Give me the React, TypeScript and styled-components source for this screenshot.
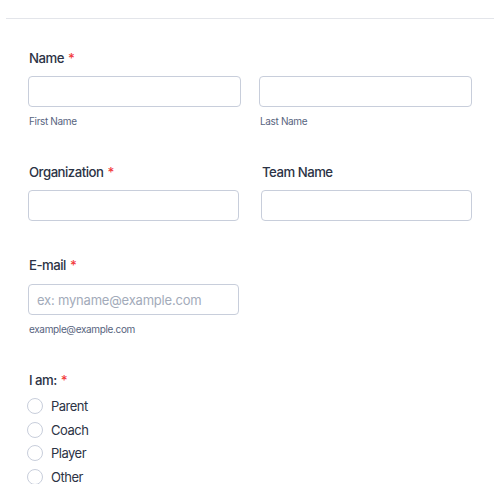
import React from "react";
import styled, { createGlobalStyle } from "styled-components";

const Global = createGlobalStyle`
  html, body { margin: 0; padding: 0; background: #ffffff; }
  body { font-family: Inter, "Noto Sans", sans-serif; color: #2c3345; }
  * { box-sizing: border-box; }
`;

const Page = styled.div`
  width: 500px;
  height: 484px;
  overflow: hidden;
  padding: 18px 6px 0 6px;
`;

const Divider = styled.div`
  height: 1px;
  background: #e3e5ea;
`;

const Form = styled.div`
  display: flex;
  flex-direction: column;
  gap: 34px;
  padding: 29px 0 0 22px;
`;

const Field = styled.div<{ $shift?: number }>`
  display: flex;
  flex-direction: column;
  margin-top: ${(p) => p.$shift ?? 0}px;
`;

const Label = styled.div`
  font-size: 13.2px;
  font-weight: 500;
  line-height: 20px;
  letter-spacing: -0.5px;
  color: #2c3345;
  margin-left: 1px;
`;

const Star = styled.span`
  color: #f23a3c;
  margin-left: 4px;
`;

const Row = styled.div<{ $gap: number }>`
  display: flex;
  gap: ${(p) => p.$gap}px;
`;

const Col = styled.div<{ $w: number }>`
  width: ${(p) => p.$w}px;
  display: flex;
  flex-direction: column;
`;

const Input = styled.input`
  height: 31px;
  width: 100%;
  border: 1px solid #c8cedb;
  border-radius: 4px;
  background: #fff;
  padding: 0 8px;
  font-family: inherit;
  font-size: 13px;
  letter-spacing: -0.2px;
  color: #2c3345;
  outline: none;
  &::placeholder { color: #a3abba; }
`;

const Sub = styled.div`
  margin-top: 7px;
  font-size: 10px;
  line-height: 14px;
  letter-spacing: -0.35px;
  color: #57647e;
  margin-left: 1px;
`;

const LabelRow = styled.div<{ $mb?: number }>`
  display: flex;
  height: 20px;
  margin-bottom: ${(p) => p.$mb ?? 8}px;
`;

const Radios = styled.div`
  display: flex;
  flex-direction: column;
  margin-top: 4px;
`;

const RadioRow = styled.label`
  display: flex;
  align-items: center;
  height: 23.7px;
  font-size: 13px;
  letter-spacing: -0.5px;
  color: #2c3345;
`;

const Circle = styled.span`
  width: 16px;
  height: 16px;
  border-radius: 50%;
  border: 1px solid #c8cedb;
  margin-left: -1px;
  margin-right: 8px;
  flex: none;
`;

export default function App() {
  return (
    <>
      <Global />
      <Page>
        <Divider />
        <Form>
          <Field>
            <LabelRow>
              <Label>Name<Star>*</Star></Label>
            </LabelRow>
            <Row $gap={18}>
              <Col $w={213}>
                <Input />
                <Sub>First Name</Sub>
              </Col>
              <Col $w={213}>
                <Input />
                <Sub>Last Name</Sub>
              </Col>
            </Row>
          </Field>
          <Field>
            <Row $gap={22}>
              <Col $w={211}>
                <LabelRow><Label>Organization<Star>*</Star></Label></LabelRow>
                <Input />
              </Col>
              <Col $w={211}>
                <LabelRow><Label>Team Name</Label></LabelRow>
                <Input />
              </Col>
            </Row>
          </Field>
          <Field>
            <LabelRow $mb={9}><Label>E-mail<Star>*</Star></Label></LabelRow>
            <Col $w={211}>
              <Input placeholder="ex: myname@example.com" />
              <Sub>example@example.com</Sub>
            </Col>
          </Field>
          <Field>
            <Label>I am:<Star>*</Star></Label>
            <Radios>
              {["Parent", "Coach", "Player", "Other"].map((o) => (
                <RadioRow key={o}>
                  <Circle />
                  {o}
                </RadioRow>
              ))}
            </Radios>
          </Field>
        </Form>
      </Page>
    </>
  );
}
